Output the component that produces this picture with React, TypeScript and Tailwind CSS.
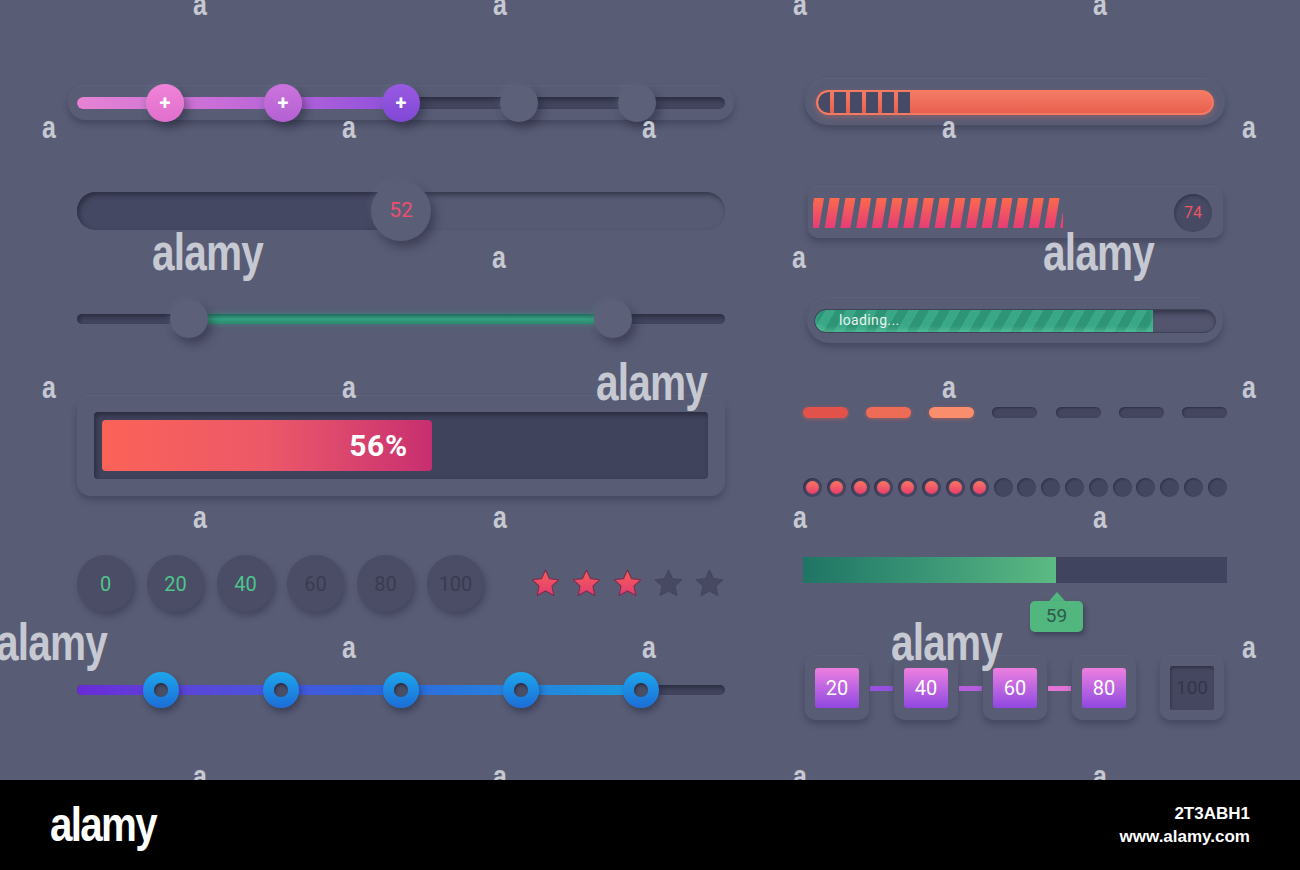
import React from "react";

// Neumorphic progress / slider kit on a slate background
const raised =
  "shadow-[4px_6px_10px_rgba(30,32,50,0.45),-2px_-2px_6px_rgba(125,130,160,0.22)]";
const band =
  "shadow-[0_4px_6px_rgba(35,37,55,0.35),0_-1px_2px_rgba(130,135,165,0.25)]";
const inset = "shadow-[inset_2px_3px_5px_rgba(20,22,38,0.5)]";

function PlusSlider() {
  const knobs = [
    { x: 88, cls: "bg-gradient-to-b from-[#f083d8] to-[#e070cc]", plus: true },
    { x: 206, cls: "bg-gradient-to-b from-[#cc74dc] to-[#b460d4]", plus: true },
    { x: 324, cls: "bg-gradient-to-b from-[#9a5ae2] to-[#8048d6]", plus: true },
    { x: 442, cls: "bg-[#5c6079]", plus: false },
    { x: 560, cls: "bg-[#5c6079]", plus: false },
  ];
  return (
    <div className={`mt-[86px] -mx-[9px] flex h-[34px] items-center rounded-full px-[9px] ${band}`}>
      <div className={`relative h-3 w-full rounded-full bg-[#43465e] ${inset}`}>
        <div className="absolute inset-y-0 left-0 w-[324px] rounded-full bg-gradient-to-r from-[#e683d4] via-[#c46ad8] to-[#8e4edc]" />
        {knobs.map((k) => (
          <div
            key={k.x}
            className={`absolute top-1/2 flex size-[38px] -translate-x-1/2 -translate-y-1/2 items-center justify-center rounded-full text-[20px] font-bold leading-none text-white ${k.cls} ${raised}`}
            style={{ left: k.x }}
          >
            {k.plus ? "+" : ""}
          </div>
        ))}
      </div>
    </div>
  );
}

function ValueSlider() {
  return (
    <div className="mt-[61px] flex h-[60px] items-center">
      <div className={`relative h-[38px] w-full rounded-full bg-[#565a73] ${inset}`}>
        <div className={`absolute inset-y-0 left-0 w-[340px] rounded-l-full bg-[#454862] ${inset}`} />
        <div
          className={`absolute left-[324px] top-1/2 flex size-[60px] -translate-x-1/2 -translate-y-1/2 items-center justify-center rounded-full bg-[#5a5e77] text-[21px] text-[#ec4f6e] ${raised}`}
        >
          52
        </div>
      </div>
    </div>
  );
}

function RangeSlider() {
  return (
    <div className="mt-[59px] flex h-[38px] items-center">
      <div className={`relative h-[10px] w-full rounded-full bg-[#43465e] ${inset}`}>
        <div className="absolute inset-y-0 left-[112px] w-[424px] bg-gradient-to-b from-[#226a5c] via-[#34a080] to-[#2b8a6e] shadow-[0_0_6px_rgba(50,170,130,0.45)]" />
        {[112, 536].map((x) => (
          <div
            key={x}
            className={`absolute top-1/2 size-[38px] -translate-x-1/2 -translate-y-1/2 rounded-full bg-[#5c6079] ${raised}`}
            style={{ left: x }}
          />
        ))}
      </div>
    </div>
  );
}

function PercentBar() {
  return (
    <div className={`mt-[58px] h-[100px] rounded-[14px] px-[17px] py-[16px] ${band}`}>
      <div className={`h-[67px] rounded-[4px] bg-[#40435c] p-[8px] ${inset}`}>
        <div className="flex h-[51px] w-[330px] items-center justify-end rounded-[4px] bg-gradient-to-r from-[#fb6357] via-[#ec5868] to-[#c82e70] pr-[24px] text-[30px] font-bold tracking-wide text-white">
          56%
        </div>
      </div>
    </div>
  );
}

function Star({ on }: { on: boolean }) {
  return (
    <svg width="33" height="31" viewBox="0 0 24 23">
      <defs>
        <linearGradient id="starFill" x1="0" y1="0" x2="0" y2="1">
          <stop offset="0" stopColor="#f66058" />
          <stop offset="1" stopColor="#e23a72" />
        </linearGradient>
      </defs>
      <path
        d="M12 1.5l3 6.4 6.9.8-5.1 4.8 1.4 6.9L12 17l-6.2 3.4 1.4-6.9-5.1-4.8 6.9-.8z"
        fill={on ? "url(#starFill)" : "#464961"}
        stroke={on ? "#7a2f4e" : "#444760"}
        strokeWidth="0.8"
        strokeLinejoin="round"
      />
    </svg>
  );
}

function StepsAndStars() {
  const steps = [
    { v: "0", on: true },
    { v: "20", on: true },
    { v: "40", on: true },
    { v: "60", on: false },
    { v: "80", on: false },
    { v: "100", on: false },
  ];
  return (
    <div className="mt-[59px] flex h-[57px] items-center">
      <div className="flex gap-[13px]">
        {steps.map((s) => (
          <div
            key={s.v}
            className={`flex size-[57px] items-center justify-center rounded-full bg-[#4a4d65] text-[20px] shadow-[2px_4px_6px_rgba(30,32,50,0.35)] ${
              s.on ? "text-[#4fc48c]" : "text-[#393c50]"
            }`}
          >
            {s.v}
          </div>
        ))}
      </div>
      <div className="ml-[45px] flex gap-[8px]">
        {[true, true, true, false, false].map((on, i) => (
          <Star key={i} on={on} />
        ))}
      </div>
    </div>
  );
}

function RingSlider() {
  return (
    <div className="mt-[60px] flex h-[36px] items-center">
      <div className={`relative h-[10px] w-full rounded-full bg-[#43465e] ${inset}`}>
        <div className="absolute inset-y-0 left-0 w-[564px] rounded-l-full bg-gradient-to-r from-[#6a2ad8] via-[#2f62dc] to-[#1a9ade]" />
        {[84, 204, 324, 444, 564].map((x) => (
          <div
            key={x}
            className="absolute top-1/2 flex size-[36px] -translate-x-1/2 -translate-y-1/2 items-center justify-center rounded-full bg-gradient-to-b from-[#1fa6ec] to-[#1d6cd6] shadow-[2px_4px_6px_rgba(25,28,50,0.45)]"
            style={{ left: x }}
          >
            <div className="size-[14px] rounded-full bg-[#4a4d64] shadow-[inset_1px_2px_3px_rgba(10,12,30,0.5)]" />
          </div>
        ))}
      </div>
    </div>
  );
}

function SegmentBar() {
  return (
    <div className={`ml-[2px] mt-[79px] flex h-[46px] w-[420px] items-center rounded-full px-[11px] ${band}`}>
      <div className="flex h-[25px] w-full overflow-hidden rounded-full border-2 border-[#f47a62] bg-gradient-to-b from-[#f37a64] to-[#e8604f] shadow-[0_2px_6px_rgba(240,110,90,0.35)]">
        <div className="flex h-full gap-[4px]">
          {[0, 1, 2, 3, 4, 5].map((i) => (
            <div
              key={i}
              className={`h-full w-[12px] bg-[#464a64] ${i === 0 ? "rounded-l-full" : ""}`}
            />
          ))}
        </div>
      </div>
    </div>
  );
}

function StripeBar() {
  const stripes = Array.from({ length: 17 }, (_, i) => i * 15.7 - 4);
  return (
    <div className={`ml-[5px] mt-[62px] flex h-[51px] w-[415px] items-center justify-between rounded-[10px] pl-[5px] pr-[11px] ${band}`}>
      <svg width="250" height="30" viewBox="0 0 250 30">
        <defs>
          <linearGradient id="stripeFill" x1="0" y1="0" x2="0" y2="1">
            <stop offset="0" stopColor="#fb6a4c" />
            <stop offset="1" stopColor="#e63c78" />
          </linearGradient>
        </defs>
        {stripes.map((x) => (
          <polygon
            key={x}
            points={`${x},30 ${x + 10},30 ${x + 15},0 ${x + 5},0`}
            fill="url(#stripeFill)"
          />
        ))}
      </svg>
      <div className="flex size-[38px] items-center justify-center rounded-full bg-[#464a63] text-[16px] text-[#ec5468] shadow-[inset_1px_2px_3px_rgba(20,22,38,0.35)]">
        74
      </div>
    </div>
  );
}

function LoadingBar() {
  return (
    <div className={`ml-[4px] mt-[60px] flex h-[45px] w-[416px] items-center rounded-full px-[7px] ${band}`}>
      <div className={`relative h-[24px] w-full overflow-hidden rounded-full border border-[#3e4157] bg-[#52556d] ${inset}`}>
        <div className="flex h-full w-[338px] items-center rounded-l-full bg-[repeating-linear-gradient(120deg,#2e9476_0px,#2e9476_9px,#3aa886_9px,#3aa886_18px)] pl-[24px] text-[14px] tracking-wide text-[#e8f2ee] shadow-[inset_0_-3px_4px_rgba(120,220,180,0.35)]">
          loading...
        </div>
      </div>
    </div>
  );
}

function Dashes() {
  const colors = [
    "bg-[#e2524a]",
    "bg-[#ee6c56]",
    "bg-[#fa8e6c]",
    "bg-[#43465e]",
    "bg-[#43465e]",
    "bg-[#43465e]",
    "bg-[#43465e]",
  ];
  return (
    <div className="mt-[64px] flex h-[11px] w-[424px] justify-between">
      {colors.map((c, i) => (
        <div
          key={i}
          className={`h-[11px] w-[45px] rounded-full ${c} ${
            i < 3 ? "shadow-[0_1px_4px_rgba(240,100,80,0.45)]" : "shadow-[inset_1px_1px_2px_rgba(20,22,38,0.45)]"
          }`}
        />
      ))}
    </div>
  );
}

function Dots() {
  return (
    <div className="mt-[60px] flex h-[19px] w-[424px] justify-between">
      {Array.from({ length: 18 }, (_, i) => (
        <div
          key={i}
          className="flex size-[19px] items-center justify-center rounded-full bg-[#444760] shadow-[inset_1px_1px_2px_rgba(20,22,38,0.45)]"
        >
          {i < 8 && (
            <div className="size-[13px] rounded-full bg-gradient-to-b from-[#fa7560] to-[#e63a6c]" />
          )}
        </div>
      ))}
    </div>
  );
}

function TooltipBar() {
  return (
    <div className="mt-[60px]">
      <div className="flex h-[26px] w-[424px] bg-[#41445e]">
        <div className="h-full w-[253px] bg-gradient-to-r from-[#1e7565] via-[#3a9676] to-[#5cba82]" />
      </div>
      <div className="ml-[227px] mt-[9px] flex w-[53px] flex-col items-center">
        <div className="h-0 w-0 border-x-[8px] border-b-[9px] border-x-transparent border-b-[#52b67f]" />
        <div className="flex h-[31px] w-[53px] items-center justify-center rounded-[5px] bg-[#52b67f] text-[19px] text-[#2f5a4c] shadow-[2px_3px_5px_rgba(25,28,45,0.4)]">
          59
        </div>
      </div>
    </div>
  );
}

function StepBoxes() {
  const items = [
    { v: "20", link: "bg-[#9850e0]" },
    { v: "40", link: "bg-[#b65ede]" },
    { v: "60", link: "bg-[#e274d8]" },
    { v: "80", link: "" },
  ];
  return (
    <div className="ml-[2px] mt-[24px] flex h-[64px] items-center">
      {items.map((it) => (
        <React.Fragment key={it.v}>
          <div className={`flex size-[64px] items-center justify-center rounded-[10px] ${band}`}>
            <div className="flex h-[40px] w-[44px] items-center justify-center rounded-[3px] bg-gradient-to-b from-[#ee7edf] to-[#9046e0] text-[20px] text-white">
              {it.v}
            </div>
          </div>
          {it.link ? <div className={`mx-[1px] h-[5px] w-[23px] ${it.link}`} /> : null}
        </React.Fragment>
      ))}
      <div className={`ml-[24px] flex size-[64px] items-center justify-center rounded-[10px] ${band}`}>
        <div className="flex h-[44px] w-[44px] items-center justify-center rounded-[3px] bg-[#44475f] text-[19px] text-[#33364a] shadow-[inset_1px_2px_3px_rgba(20,22,38,0.4)]">
          100
        </div>
      </div>
    </div>
  );
}

// stock watermark marks laid over the sheet
const marks: { x: number; y: number; big?: boolean }[] = [
  { x: 193, y: -12 }, { x: 493, y: -12 }, { x: 793, y: -12 }, { x: 1093, y: -12 },
  { x: 42, y: 111 }, { x: 342, y: 111 }, { x: 642, y: 111 }, { x: 942, y: 111 }, { x: 1242, y: 111 },
  { x: 152, y: 226, big: true }, { x: 492, y: 241 }, { x: 792, y: 241 }, { x: 1043, y: 226, big: true },
  { x: 42, y: 371 }, { x: 342, y: 371 }, { x: 596, y: 356, big: true }, { x: 942, y: 371 }, { x: 1242, y: 371 },
  { x: 193, y: 501 }, { x: 493, y: 501 }, { x: 793, y: 501 }, { x: 1093, y: 501 },
  { x: -4, y: 616, big: true }, { x: 342, y: 631 }, { x: 642, y: 631 }, { x: 891, y: 616, big: true }, { x: 1242, y: 631 },
  { x: 193, y: 760 }, { x: 493, y: 760 }, { x: 793, y: 760 }, { x: 1093, y: 760 },
];

export default function App() {
  return (
    <div className="w-[1300px] font-['Roboto',sans-serif]">
      <div className="relative h-[780px] overflow-hidden bg-[#585c75]">
        <div className="flex pl-[77px]">
          <div className="w-[648px]">
            <PlusSlider />
            <ValueSlider />
            <RangeSlider />
            <PercentBar />
            <StepsAndStars />
            <RingSlider />
          </div>
          <div className="ml-[78px] w-[424px]">
            <SegmentBar />
            <StripeBar />
            <LoadingBar />
            <Dashes />
            <Dots />
            <TooltipBar />
            <StepBoxes />
          </div>
        </div>
        <div className="pointer-events-none absolute inset-0 font-['Liberation_Sans',sans-serif] font-bold text-[#c6c8d2]">
          {marks.map((m) => (
            <span
              key={`${m.x}-${m.y}`}
              className={`absolute origin-top-left scale-x-[0.78] leading-none tracking-[-1px] ${m.big ? "text-[52px]" : "text-[32px]"}`}
              style={{ left: m.x, top: m.y }}
            >
              {m.big ? "alamy" : "a"}
            </span>
          ))}
        </div>
      </div>
      <div className="flex h-[90px] items-center justify-between bg-black pl-[50px] pr-[50px] text-white">
        <span className="origin-left scale-x-[0.84] font-['Liberation_Sans',sans-serif] text-[48px] font-bold tracking-[-2px]">
          alamy
        </span>
        <div className="text-right font-['Liberation_Sans',sans-serif] text-[17px] font-bold leading-[23px]">
          <div>2T3ABH1</div>
          <div>www.alamy.com</div>
        </div>
      </div>
    </div>
  );
}
